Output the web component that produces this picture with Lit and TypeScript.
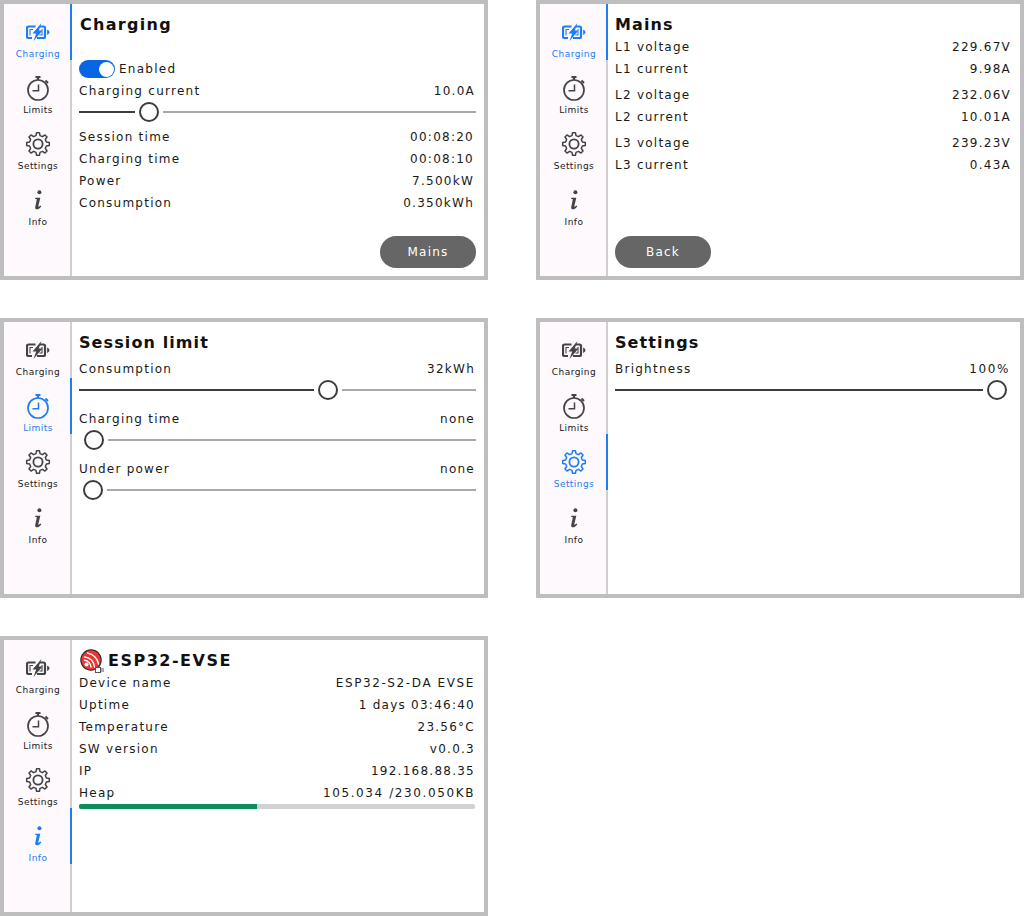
import { LitElement, html, css, svg } from "lit";
import { customElement, property } from "lit/decorators.js";

function gearPath(cx: number, cy: number, teeth: number, ro: number, ri: number) {
  const pts: string[] = [];
  const step = (Math.PI * 2) / teeth;
  for (let i = 0; i < teeth; i++) {
    const a = -Math.PI / 2 + i * step;
    const p = (ang: number, r: number) =>
      `${(cx + Math.cos(ang) * r).toFixed(2)} ${(cy + Math.sin(ang) * r).toFixed(2)}`;
    pts.push(
      `${i === 0 ? "M" : "L"}${p(a - step * 0.3, ri)}`,
      `L${p(a - step * 0.16, ro)}`,
      `L${p(a + step * 0.16, ro)}`,
      `L${p(a + step * 0.3, ri)}`
    );
  }
  return pts.join(" ") + "Z";
}

const icons: Record<string, unknown> = {
  Charging: svg`<svg viewBox="0 0 24 18" width="24" height="18" fill="none" stroke="currentColor">
    <path d="M9.500 3.500H2.500A1.500 1.500 0 0 0 1 5V13.500A1.500 1.500 0 0 0 2.500 15H6" stroke-width="2.200"/>
    <path d="M13.500 3.500H17.500A1.500 1.500 0 0 1 19 5V13.500A1.500 1.500 0 0 1 17.500 15H11" stroke-width="2.200"/>
    <path d="M4 12.500V6.500H7M16 6V12H13.500" stroke-width="1.100"/>
    <path d="M15.500 0L6.500 10.500H10.200L7.500 18L16.500 7.500H12.800Z" fill="currentColor" stroke="none"/>
    <path d="M21.500 7V11.500L23 10.200V8.300Z" fill="currentColor" stroke="currentColor" stroke-width=".7"/></svg>`,
  Limits: svg`<svg viewBox="0 0 24 26" width="24" height="26" fill="none" stroke="currentColor" stroke-width="1.700">
    <circle cx="12" cy="15" r="10"/>
    <path d="M9.500 2H14.500M12 2V5" stroke-width="2.200"/>
    <path d="M19.500 5.500L22 8" stroke-width="2"/>
    <path d="M12.500 9.500V15.800H6.500" stroke-width="1.500"/></svg>`,
  Settings: svg`<svg viewBox="0 0 26 26" width="26" height="26" fill="none" stroke="currentColor" stroke-width="1.500" stroke-linejoin="round">
    <circle cx="13" cy="13" r="4.600" stroke-width="1.800"/>
    <path d="${gearPath(13, 13, 8, 11.400, 8.600)}"/></svg>`,
  Info: svg`<svg viewBox="0 0 14 24" width="13" height="22" fill="currentColor">
    <circle cx="8" cy="3.500" r="2.200"/>
    <path d="M3.500 9.500H9L6.800 18.500C6.600 19.500 7.300 19.600 9.500 18L10 19C8 21.500 6 22.500 4.500 22C3.300 21.600 3.200 20.500 3.500 19.300L5.200 11.200L3.300 10.700Z"/></svg>`,
};

const logo = svg`<svg viewBox="0 0 24 24" width="24" height="24" fill="none">
  <circle cx="11" cy="11" r="10.200" fill="#ee3430" stroke="#2a2a2a" stroke-width="1.100"/>
  <g stroke="#fff" stroke-width="1.400" stroke-linecap="round">
    <path d="M4.500 8A10.500 10.500 0 0 1 14.500 18"/>
    <path d="M4.500 11.300A7 7 0 0 1 11 18"/>
    <path d="M7.500 4A14 14 0 0 1 18.500 15"/>
  </g>
  <circle cx="6.500" cy="15.500" r="2" fill="#fff"/>
  <rect x="15.500" y="18.500" width="5" height="5" fill="#fff" stroke="#555" stroke-width="1"/>
  <path d="M20.500 20H24M20.500 22H24" stroke="#555" stroke-width="1"/>
</svg>`;

@customElement("side-bar")
class SideBar extends LitElement {
  @property() active = "";
  static styles = css`
    :host {
      display: flex;
      flex-direction: column;
      width: 68px;
      flex: none;
      box-sizing: border-box;
      background: #fdf9fd;
      border-right: 2px solid #cfcfcf;
    }
    .item {
      height: 56px;
      padding-left: 2px;
      margin-right: -2px;
      border-right: 2px solid transparent;
      display: flex;
      flex-direction: column;
      align-items: center;
      color: #444;
    }
    .item.on {
      color: #1f7cf2;
      border-right-color: #1f7cf2;
    }
    .ico {
      height: 32px;
      margin-top: 12px;
      display: flex;
      align-items: center;
      justify-content: center;
    }
    .label {
      font: 9px/12px "DejaVu Sans", sans-serif;
      letter-spacing: 0.45px;
      color: #1a1a1a;
    }
    .on .label {
      color: #1f7cf2;
    }
  `;
  render() {
    return ["Charging", "Limits", "Settings", "Info"].map(
      (n) => html`<div class="item ${n === this.active ? "on" : ""}">
        <div class="ico">${icons[n]}</div>
        <div class="label">${n}</div>
      </div>`
    );
  }
}

@customElement("lv-slider")
class LvSlider extends LitElement {
  @property({ type: Number }) knob = 0;
  static styles = css`
    :host {
      display: flex;
      align-items: center;
      height: 28px;
      margin-top: -4px;
      margin-right: -1px;
    }
    .l {
      height: 2px;
      background: #3c3c3c;
      flex: none;
      margin-right: 4px;
    }
    .pad {
      flex: none;
    }
    .r {
      height: 2px;
      background: #a9a9a9;
      flex: 1;
      margin-left: 4px;
    }
    .k {
      width: 20px;
      height: 20px;
      box-sizing: border-box;
      border: 2px solid #3c3c3c;
      border-radius: 50%;
      background: #fff;
      flex: none;
    }
  `;
  render() {
    return html`${this.knob > 8
        ? html`<div class="l" style="width:${this.knob - 4}px"></div>`
        : html`<div class="pad" style="width:${this.knob}px"></div>`}
      <div class="k"></div>
      ${this.knob < 370 ? html`<div class="r"></div>` : ""}`;
  }
}

type Kv = [string, string];

@customElement("app-root")
class AppRoot extends LitElement {
  static styles = css`
    :host {
      display: grid;
      grid-template-columns: 488px 488px;
      grid-auto-rows: 280px;
      column-gap: 48px;
      row-gap: 38px;
      width: 1024px;
      font: 12px/22px "DejaVu Sans", sans-serif;
      letter-spacing: 1.25px;
      color: #1a1a1a;
      background: #fff;
    }
    .screen {
      box-sizing: border-box;
      border: 4px solid #bebebe;
      display: flex;
      background: #fff;
      overflow: hidden;
    }
    .main {
      flex: 1;
      min-width: 0;
      display: flex;
      flex-direction: column;
      padding: 10px 9px 8px 7px;
    }
    .title {
      font: bold 16px/22px "DejaVu Sans", sans-serif;
      letter-spacing: 1.1px;
      color: #111;
      height: 22px;
      display: flex;
      align-items: center;
      gap: 4px;
    }
    .title.wide {
      letter-spacing: 1.5px;
      margin-left: 1px;
    }
    .title.nudge {
      letter-spacing: 1.3px;
      margin-left: 1px;
    }
    .row {
      display: flex;
      justify-content: space-between;
      height: 22px;
      line-height: 22px;
      white-space: nowrap;
    }
    .toggle-row {
      display: flex;
      align-items: center;
      gap: 4px;
      height: 18px;
      margin-top: 24px;
      margin-bottom: 2px;
    }
    .toggle {
      width: 36px;
      height: 18px;
      border-radius: 9px;
      background: #0866e4;
      position: relative;
      flex: none;
    }
    .toggle::after {
      content: "";
      position: absolute;
      right: 1px;
      top: 1.5px;
      width: 15px;
      height: 15px;
      border-radius: 50%;
      background: #fff;
    }
    .btn {
      margin-top: auto;
      width: 96px;
      height: 32px;
      border-radius: 16px;
      background: #666;
      color: #fff;
      display: flex;
      align-items: center;
      justify-content: center;
    }
    .btn.end {
      align-self: flex-end;
      margin-right: -1px;
    }
    .bar {
      height: 5px;
      border-radius: 2px;
      background: #d2d2d2;
      overflow: hidden;
    }
    .bar div {
      height: 100%;
      background: #0a8f5c;
    }
    .mt4 {
      margin-top: 4px;
    }
    .inset span:last-child {
      margin-right: 1px;
    }
    .stretch span:last-child {
      letter-spacing: 1.6px;
    }
  `;

  rows(list: Kv[], cls = "") {
    return list.map(
      (r) => html`<div class="row ${cls}"><span>${r[0]}</span><span>${r[1]}</span></div>`
    );
  }

  render() {
    return html`
      <div class="screen">
        <side-bar active="Charging"></side-bar>
        <div class="main">
          <div class="title nudge">Charging</div>
          <div class="toggle-row"><div class="toggle"></div><span>Enabled</span></div>
          ${this.rows([["Charging current", "10.0A"]])}
          <lv-slider knob="60"></lv-slider>
          ${this.rows(
            [
              ["Session time", "00:08:20"],
              ["Charging time", "00:08:10"],
              ["Power", "7.500kW"],
              ["Consumption", "0.350kWh"],
            ],
            "inset"
          )}
          <div class="btn end">Mains</div>
        </div>
      </div>
      <div class="screen">
        <side-bar active="Charging"></side-bar>
        <div class="main">
          <div class="title">Mains</div>
          ${this.rows([["L1 voltage", "229.67V"], ["L1 current", "9.98A"]])}
          <div class="mt4">${this.rows([["L2 voltage", "232.06V"], ["L2 current", "10.01A"]])}</div>
          <div class="mt4">${this.rows([["L3 voltage", "239.23V"], ["L3 current", "0.43A"]])}</div>
          <div class="btn">Back</div>
        </div>
      </div>
      <div class="screen">
        <side-bar active="Limits"></side-bar>
        <div class="main">
          <div class="title">Session limit</div>
          <div class="mt4">${this.rows([["Consumption", "32kWh"]])}</div>
          <lv-slider knob="239"></lv-slider>
          <div class="mt4">${this.rows([["Charging time", "none"]])}</div>
          <lv-slider knob="5"></lv-slider>
          <div class="mt4">${this.rows([["Under power", "none"]])}</div>
          <lv-slider knob="4"></lv-slider>
        </div>
      </div>
      <div class="screen">
        <side-bar active="Settings"></side-bar>
        <div class="main">
          <div class="title">Settings</div>
          <div class="mt4">${this.rows([["Brightness", "100%"]], "inset stretch")}</div>
          <lv-slider knob="372"></lv-slider>
        </div>
      </div>
      <div class="screen">
        <side-bar active="Info"></side-bar>
        <div class="main">
          <div class="title wide">${logo}<span>ESP32-EVSE</span></div>
          ${this.rows([["Device name", "ESP32-S2-DA EVSE"]], "stretch")}
          ${this.rows([
            ["Uptime", "1 days 03:46:40"],
            ["Temperature", "23.56°C"],
            ["SW version", "v0.0.3"],
            ["IP", "192.168.88.35"],
          ])}
          ${this.rows([["Heap", "105.034 /230.050KB"]], "stretch")}
          <div class="bar"><div style="width:45%"></div></div>
        </div>
      </div>
    `;
  }
}
